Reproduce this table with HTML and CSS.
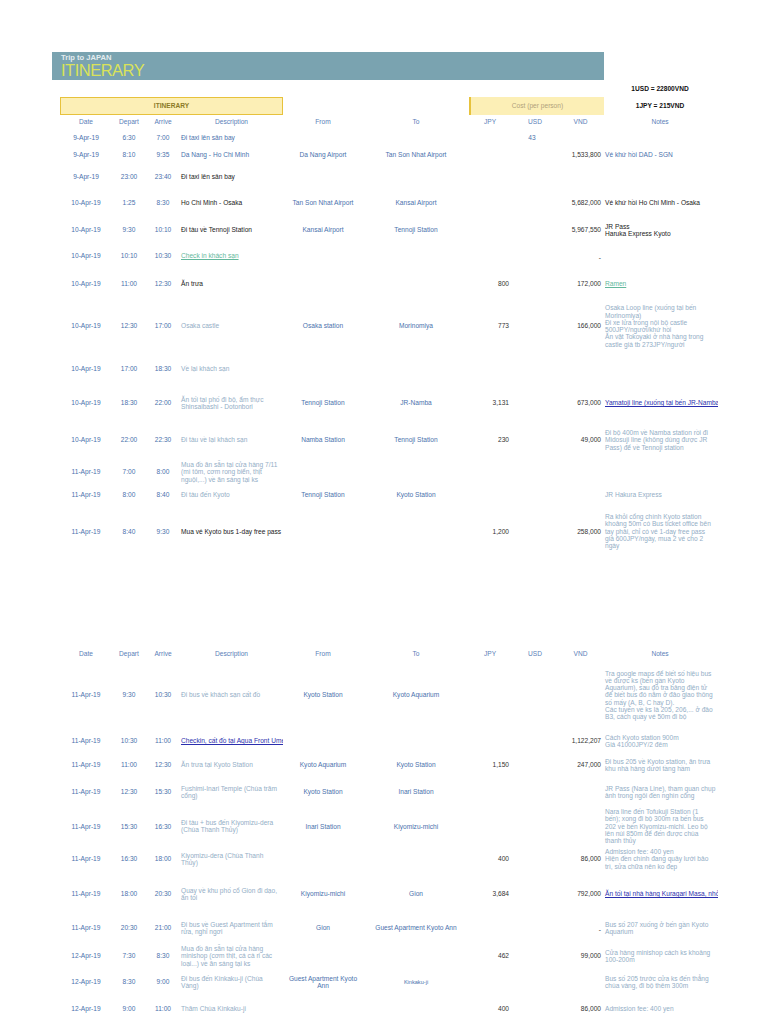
FILE: index.html
```html
<!DOCTYPE html>
<html lang="vi">
<head>
<meta charset="utf-8">
<title>Trip to JAPAN - Itinerary</title>
<link rel="stylesheet" href="styles.css">
</head>
<body>
<div class="page">
  <header class="banner">
    <div class="banner-sub">Trip to JAPAN</div>
    <div class="banner-title">ITINERARY</div>
  </header>

  <div class="sheet">
    <div class="row h17">
      <div class="rate">1USD = 22800VND</div>
    </div>
    <div class="row h17">
      <div class="box box-itin">ITINERARY</div>
      <div class="box box-cost">Cost (per person)</div>
      <div class="rate rate-jpy">1JPY = 215VND</div>
    </div>

    <div class="row head h15">
      <div>Date</div><div>Depart</div><div>Arrive</div><div>Description</div><div>From</div><div>To</div><div>JPY</div><div>USD</div><div>VND</div><div>Notes</div>
    </div>

    <div class="row h18">
      <div>9-Apr-19</div><div>6:30</div><div>7:00</div>
      <div class="bl mid">Đi taxi lên sân bay</div>
      <div></div><div></div><div></div><div class="usd">43</div><div></div><div></div>
    </div>
    <div class="row h16">
      <div>9-Apr-19</div><div>8:10</div><div>9:35</div>
      <div class="bl mid">Da Nang - Ho Chi Minh</div>
      <div>Da Nang Airport</div><div>Tan Son Nhat Airport</div><div></div><div></div><div>1,533,800</div><div class="bl">Vé khứ hồi DAD - SGN</div>
    </div>
    <div class="row h28">
      <div>9-Apr-19</div><div>23:00</div><div>23:40</div>
      <div class="k">Đi taxi lên sân bay</div>
      <div></div><div></div><div></div><div></div><div></div><div></div>
    </div>
    <div class="row h24">
      <div>10-Apr-19</div><div>1:25</div><div>8:30</div>
      <div class="k">Ho Chi Minh - Osaka</div>
      <div>Tan Son Nhat Airport</div><div>Kansai Airport</div><div></div><div></div><div>5,682,000</div><div class="k">Vé khứ hồi Ho Chi Minh - Osaka</div>
    </div>
    <div class="row h30">
      <div>10-Apr-19</div><div>9:30</div><div>10:10</div>
      <div class="k">Đi tàu về Tennoji Station</div>
      <div>Kansai Airport</div><div>Tennoji Station</div><div></div><div></div><div>5,967,550</div><div class="k"><span>JR Pass<br>Haruka Express Kyoto</span></div>
    </div>
    <div class="row h22">
      <div>10-Apr-19</div><div>10:10</div><div>10:30</div>
      <div class="tl"><span>Check in khách sạn</span></div>
      <div></div><div></div><div></div><div></div><div class="dash">-</div><div></div>
    </div>
    <div class="row h34">
      <div>10-Apr-19</div><div>11:00</div><div>12:30</div>
      <div class="k">Ăn trưa</div>
      <div></div><div></div><div>800</div><div></div><div>172,000</div><div class="tl"><span>Ramen</span></div>
    </div>
    <div class="row h50">
      <div>10-Apr-19</div><div>12:30</div><div>17:00</div>
      <div class="lt">Osaka castle</div>
      <div>Osaka station</div><div>Morinomiya</div><div>773</div><div></div><div>166,000</div>
      <div class="lt"><span>Osaka Loop line (xuống tại bến<br>Morinomiya)<br>Đi xe lửa trong nội bộ castle<br>500JPY/người/khứ hồi<br>Ăn vặt Tokoyaki ở nhà hàng trong<br>castle giá tb 273JPY/người</span></div>
    </div>
    <div class="row h36">
      <div>10-Apr-19</div><div>17:00</div><div>18:30</div>
      <div class="lt">Về lại khách sạn</div>
      <div></div><div></div><div></div><div></div><div></div><div></div>
    </div>
    <div class="row h32">
      <div>10-Apr-19</div><div>18:30</div><div>22:00</div>
      <div class="lt"><span>Ăn tối tại phố đi bộ, ẩm thực<br>Shinsaibashi - Dotonbori</span></div>
      <div>Tennoji Station</div><div>JR-Namba</div><div>3,131</div><div></div><div>673,000</div><div class="dl clip"><span>Yamatoji line (xuống tại bến JR-Namba)</span></div>
    </div>
    <div class="row h42">
      <div>10-Apr-19</div><div>22:00</div><div>22:30</div>
      <div class="lt">Đi tàu về lại khách sạn</div>
      <div>Namba Station</div><div>Tennoji Station</div><div>230</div><div></div><div>49,000</div>
      <div class="lt"><span>Đi bộ 400m về Namba station rồi đi<br>Midosuji line (không dùng được JR<br>Pass) để về Tennoji station</span></div>
    </div>
    <div class="row h16">
      <div>11-Apr-19</div><div>7:00</div><div>8:00</div>
      <div class="lt"><span>Mua đồ ăn sẵn tại cửa hàng 7/11<br>(mì tôm, cơm rong biển, thịt<br>nguội,...) về ăn sáng tại ks</span></div>
      <div></div><div></div><div></div><div></div><div></div><div></div>
    </div>
    <div class="row h36">
      <div>11-Apr-19</div><div>8:00</div><div>8:40</div>
      <div class="lt">Đi tàu đến Kyoto</div>
      <div>Tennoji Station</div><div>Kyoto Station</div><div></div><div></div><div></div><div class="lt">JR Hakura Express</div>
    </div>
    <div class="row h34">
      <div>11-Apr-19</div><div>8:40</div><div>9:30</div>
      <div class="k wide">Mua vé Kyoto bus 1-day free pass</div>
      <div></div><div></div><div>1,200</div><div></div><div>258,000</div>
      <div class="lt"><span>Ra khỏi cổng chính Kyoto station<br>khoảng 50m có Bus ticket office bên<br>tay phải, chỉ có vé 1-day free pass<br>giá 600JPY/ngày, mua 2 vé cho 2<br>ngày</span></div>
    </div>

    <div class="spacer"></div>

    <div class="row head h16">
      <div>Date</div><div>Depart</div><div>Arrive</div><div>Description</div><div>From</div><div>To</div><div>JPY</div><div>USD</div><div>VND</div><div>Notes</div>
    </div>
    <div class="row h66">
      <div>11-Apr-19</div><div>9:30</div><div>10:30</div>
      <div class="lt">Đi bus về khách sạn cất đồ</div>
      <div>Kyoto Station</div><div>Kyoto Aquarium</div><div></div><div></div><div></div>
      <div class="lt"><span>Tra google maps để biết số hiệu bus<br>về được ks (bến gần Kyoto<br>Aquarium), sau đó tra bảng điện tử<br>để biết bus đó nằm ở đảo giao thông<br>số mấy (A, B, C hay D).<br>Các tuyến về ks là 205, 206,... ở đảo<br>B3, cách quầy vé 50m đi bộ</span></div>
    </div>
    <div class="row h26">
      <div>11-Apr-19</div><div>10:30</div><div>11:00</div>
      <div class="dl clip"><span>Checkin, cất đồ tại Aqua Front Umekoji</span></div>
      <div></div><div></div><div></div><div></div><div>1,122,207</div>
      <div class="lt"><span>Cách Kyoto station 900m<br>Giá 41000JPY/2 đêm</span></div>
    </div>
    <div class="row h22">
      <div>11-Apr-19</div><div>11:00</div><div>12:30</div>
      <div class="lt">Ăn trưa tại Kyoto Station</div>
      <div>Kyoto Aquarium</div><div>Kyoto Station</div><div>1,150</div><div></div><div>247,000</div>
      <div class="lt"><span>Đi bus 205 về Kyoto station, ăn trưa<br>khu nhà hàng dưới tầng hầm</span></div>
    </div>
    <div class="row h32">
      <div>11-Apr-19</div><div>12:30</div><div>15:30</div>
      <div class="lt"><span>Fushimi-Inari Temple (Chùa trăm<br>cổng)</span></div>
      <div>Kyoto Station</div><div>Inari Station</div><div></div><div></div><div></div>
      <div class="lt"><span>JR Pass (Nara Line), tham quan chụp<br>ảnh trong ngôi đền nghìn cổng</span></div>
    </div>
    <div class="row h36">
      <div>11-Apr-19</div><div>15:30</div><div>16:30</div>
      <div class="lt"><span>Đi tàu + bus đến Kiyomizu-dera<br>(Chùa Thanh Thủy)</span></div>
      <div>Inari Station</div><div>Kiyomizu-michi</div><div></div><div></div><div></div>
      <div class="lt"><span>Nara line đến Tofukuji Station (1<br>bến); xong đi bộ 300m ra bến bus<br>202 về bến Kiyomizu-michi. Leo bộ<br>lên núi 850m để đến được chùa<br>thanh thủy</span></div>
    </div>
    <div class="row h30">
      <div>11-Apr-19</div><div>16:30</div><div>18:00</div>
      <div class="lt"><span>Kiyomizu-dera (Chùa Thanh<br>Thủy)</span></div>
      <div></div><div></div><div>400</div><div></div><div>86,000</div>
      <div class="lt"><span>Admission fee: 400 yen<br>Hiện đền chính đang quây lưới bảo<br>trì, sửa chữa nên ko đẹp</span></div>
    </div>
    <div class="row h40">
      <div>11-Apr-19</div><div>18:00</div><div>20:30</div>
      <div class="lt"><span>Quay về khu phố cổ Gion đi dạo,<br>ăn tối</span></div>
      <div>Kiyomizu-michi</div><div>Gion</div><div>3,684</div><div></div><div>792,000</div>
      <div class="dl clip"><span>Ăn tối tại nhà hàng Kuragari Masa, nhỏ</span></div>
    </div>
    <div class="row h28">
      <div>11-Apr-19</div><div>20:30</div><div>21:00</div>
      <div class="lt"><span>Đi bus về Guest Apartment tắm<br>rửa, nghỉ ngơi</span></div>
      <div>Gion</div><div>Guest Apartment Kyoto Ann</div><div></div><div></div><div class="dash">-</div>
      <div class="lt"><span>Bus số 207 xuống ở bến gần Kyoto<br>Aquarium</span></div>
    </div>
    <div class="row h28">
      <div>12-Apr-19</div><div>7:30</div><div>8:30</div>
      <div class="lt"><span>Mua đồ ăn sẵn tại cửa hàng<br>minishop (cơm thịt, cá cà ri các<br>loại...) về ăn sáng tại ks</span></div>
      <div></div><div></div><div>462</div><div></div><div>99,000</div>
      <div class="lt"><span>Cửa hàng minishop cách ks khoảng<br>100-200m</span></div>
    </div>
    <div class="row h24">
      <div>12-Apr-19</div><div>8:30</div><div>9:00</div>
      <div class="lt"><span>Đi bus đến Kinkaku-ji (Chùa<br>Vàng)</span></div>
      <div><span>Guest Apartment Kyoto<br>Ann</span></div><div class="small">Kinkaku-ji</div><div></div><div></div><div></div>
      <div class="lt"><span>Bus số 205 trước cửa ks đến thẳng<br>chùa vàng, đi bộ thêm 300m</span></div>
    </div>
    <div class="row h30">
      <div>12-Apr-19</div><div>9:00</div><div>11:00</div>
      <div class="lt">Thăm Chùa Kinkaku-ji</div>
      <div></div><div></div><div>400</div><div></div><div>86,000</div>
      <div class="lt">Admission fee: 400 yen</div>
    </div>
  </div>
</div>
</body>
</html>
```

FILE: styles.css
```css
html, body {
  margin: 0;
  padding: 0;
  background: #ffffff;
}

body {
  font-family: "Liberation Sans", Arial, sans-serif;
  font-size: 6.6px;
  line-height: 1.1;
  color: #333333;
  height: 1024px;
  overflow: hidden;
}

.page {
  padding-top: 52px;
}

/* Banner */
.banner {
  margin-left: 52px;
  width: 552px;
  height: 28px;
  background: #7aa3b0;
  box-sizing: border-box;
  padding: 1px 0 0 9px;
  display: flex;
  flex-direction: column;
}

.banner-sub {
  font-size: 7.6px;
  font-weight: bold;
  color: #e4ecef;
  line-height: 9px;
}

.banner-title {
  font-size: 16.5px;
  letter-spacing: -0.5px;
  color: #d9e25a;
  line-height: 17px;
}

/* Sheet grid */
.sheet {
  margin-left: 60px;
}

.row {
  display: grid;
  grid-template-columns: 52px 34px 34px 103px 80px 106px 42px 48px 43px 116px;
}

.row > div {
  display: flex;
  align-items: center;
  white-space: nowrap;
  min-width: 0;
}

.row > div:nth-child(1),
.row > div:nth-child(2),
.row > div:nth-child(3),
.row > div:nth-child(5),
.row > div:nth-child(6) {
  justify-content: center;
  text-align: center;
  color: #4a72ad;
}

.row > div:nth-child(4) {
  justify-content: flex-start;
  padding-left: 1px;
}

.row > div:nth-child(7) {
  justify-content: flex-end;
  padding-right: 2px;
}

.row > div:nth-child(8) {
  justify-content: center;
}

.row > div:nth-child(9) {
  justify-content: flex-end;
  padding-right: 1px;
}

.row > div:nth-child(10) {
  justify-content: flex-start;
  padding-left: 3px;
}

/* Header rows */
.row.head > div {
  justify-content: center !important;
  padding: 0 !important;
  color: #5a80b8;
}

/* Top area */
.row > div.rate {
  grid-column: 10;
  justify-content: center;
  padding: 0;
  font-weight: bold;
  color: #111111;
}

.row > div.box {
  background: #fcefb6;
  justify-content: center;
  padding: 0;
  margin-bottom: -1px;
}

.row > div.box-itin {
  grid-column: 1 / 5;
  border: 1px solid #e7c23c;
  font-weight: bold;
  color: #8c7a26;
}

.row > div.box-cost {
  grid-column: 7 / 10;
  border-left: 2px solid #e7c23c;
  color: #b0a27c;
  margin-right: -2px;
}

/* Row heights */
.h15 { height: 15px; }
.h16 { height: 16px; }
.h17 { height: 17px; }
.h18 { height: 18px; }
.h22 { height: 22px; }
.h24 { height: 24px; }
.h26 { height: 26px; }
.h28 { height: 28px; }
.h30 { height: 30px; }
.h32 { height: 32px; }
.h34 { height: 34px; }
.h36 { height: 36px; }
.h40 { height: 40px; }
.h42 { height: 42px; }
.h50 { height: 50px; }
.h66 { height: 66px; }

.spacer {
  height: 99px;
}

/* Text tones */
.row > .k { color: #1a1a1a; }
.row > .bl { color: #4a72ad; }
.row > .lt { color: #93aec6; }
.row > .tl { color: #63b89c; }
.row > .tl span { text-decoration: underline; }
.row > .dl { color: #2b2fae; }
.row > .dl span { text-decoration: underline; }

.row > .mid {
  justify-content: center;
  padding-left: 0;
}

.row > .clip {
  overflow: hidden;
}

.row > .wide {
  overflow: visible;
}

.row > .usd {
  justify-content: flex-end;
  padding-right: 6px;
  color: #4a72ad;
}

.row > .dash {
  padding-right: 4px;
  padding-top: 3px;
}

.row > .small {
  font-size: 5.6px;
}
```
